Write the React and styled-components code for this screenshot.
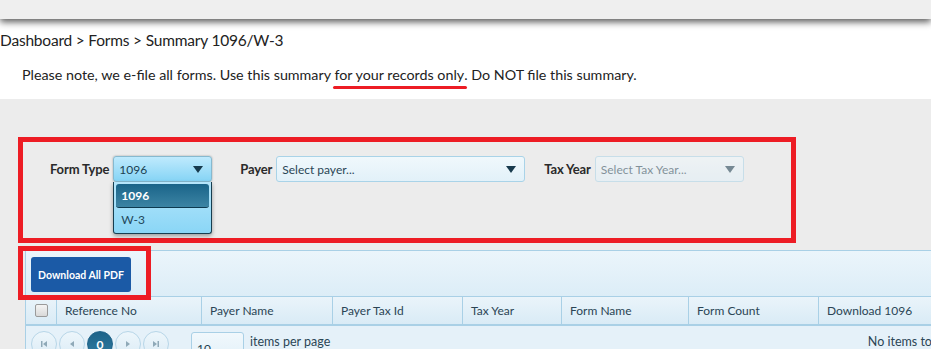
import React from "react";
import styled, { createGlobalStyle } from "styled-components";

const GlobalStyle = createGlobalStyle`
  html, body { margin: 0; padding: 0; overflow: hidden; background: #fff; }
  body { font-family: Lato, "Noto Sans", sans-serif; color: #222; }
  * { box-sizing: border-box; }
`;

const Page = styled.div`
  width: 931px;
  height: 349px;
  overflow: hidden;
  display: flex;
  flex-direction: column;
`;

const TopBar = styled.div`
  height: 19px;
  flex: none;
  background: #efefef;
  box-shadow: 0 3px 7px rgba(0, 0, 0, 0.65);
  position: relative;
  z-index: 2;
`;

const Header = styled.div`
  background: #fff;
  height: 80px;
  flex: none;
  padding-top: 11px;
`;

const Breadcrumb = styled.div`
  font-size: 15.5px;
  line-height: 20px;
  letter-spacing: -0.2px;
  color: #222;
`;

const Note = styled.div`
  margin-top: 16px;
  padding-left: 22px;
  font-size: 14.3px;
  line-height: 18px;
  color: #222;
`;

const Underlined = styled.span`
  position: relative;
  &::after {
    content: "";
    position: absolute;
    left: -1px;
    right: -3px;
    bottom: -6px;
    height: 3px;
    border-radius: 2px;
    background: #ed1c24;
  }
`;

const GrayArea = styled.div`
  flex: 1;
  background: #ececec;
  padding: 38px 0 0 18px;
  position: relative;
`;

const FilterBox = styled.div`
  width: 778px;
  height: 106px;
  border: 5px solid #ed1c24;
  padding: 14px 0 0 27px;
  display: flex;
  align-items: flex-start;
  position: relative;
  z-index: 3;
`;

const Field = styled.div`
  display: flex;
  align-items: center;
  margin-right: ${(p) => p.$gap || 0}px;
`;

const Label = styled.span`
  font-size: 13px;
  font-weight: 700;
  color: #2a2a2a;
  margin-right: 4px;
  letter-spacing: -0.15px;
`;

const SelectWrap = styled.div`
  position: relative;
`;

const Select = styled.div`
  width: ${(p) => p.$w}px;
  height: 26px;
  border-radius: 3px;
  border: 1px solid ${(p) => (p.$active ? "#86b9cf" : "#a9d3e8")};
  background: ${(p) =>
    p.$active
      ? "linear-gradient(#bfeafd, #86d4f5)"
      : "linear-gradient(#f0f8fc, #e2f1f9)"};
  display: flex;
  align-items: center;
  justify-content: space-between;
  padding: 0 8px 0 5px;
  font-size: 12px;
  color: ${(p) => (p.$active ? "#1b3f52" : "#2a4656")};
  opacity: ${(p) => (p.$disabled ? 0.55 : 1)};
  box-shadow: ${(p) => (p.$active ? "0 0 2px rgba(0,0,0,0.35)" : "none")};
`;

const Arrow = styled.span`
  width: 0;
  height: 0;
  border-left: 5px solid transparent;
  border-right: 5px solid transparent;
  border-top: 7px solid #173a4d;
`;

const DropList = styled.div`
  position: absolute;
  top: 26px;
  left: 0;
  width: 99px;
  padding: 2px 2px 2px;
  background: linear-gradient(#b6e6fb, #8ad6f6);
  border: 1px solid #173e50;
  border-top: none;
  border-radius: 0 0 3px 3px;
  box-shadow: 0 2px 4px rgba(0, 0, 0, 0.35);
`;

const DropItem = styled.div`
  height: ${(p) => (p.$selected ? 24 : 23)}px;
  display: flex;
  align-items: center;
  padding-left: 5px;
  font-size: 12px;
  border-radius: 3px;
  color: ${(p) => (p.$selected ? "#fff" : "#23485c")};
  font-weight: ${(p) => (p.$selected ? 700 : 400)};
  background: ${(p) =>
    p.$selected ? "linear-gradient(#1a6489, #3c84a4)" : "transparent"};
  border-bottom: ${(p) => (p.$selected ? "1px solid #0e3a50" : "none")};
`;

const GridWrap = styled.div`
  position: relative;
  margin-top: 7px;
  margin-left: 7px;
`;

const Highlight = styled.div`
  position: absolute;
  left: -7px;
  top: -4px;
  width: 133px;
  height: 54px;
  border: 5px solid #ed1c24;
  z-index: 3;
  pointer-events: none;
`;

const Grid = styled.div`
  width: 959px;
  border: 1px solid #a9d0e6;
  background: #e5f1f9;
`;

const Toolbar = styled.div`
  height: 45px;
  padding: 6px 0 0 5px;
  background: linear-gradient(#ebf5fb, #dcedf7);
`;

const Button = styled.button`
  width: 100px;
  height: 35px;
  border: none;
  border-radius: 3px;
  background: #1b5aa6;
  color: #fff;
  font-family: Lato, "Noto Sans", sans-serif;
  font-size: 10.5px;
  font-weight: 700;
  padding: 0;
`;

const HeaderRow = styled.div`
  display: grid;
  grid-template-columns: 30px 145px 131px 130px 99px 127px 130px 1fr;
  height: 30px;
  border-top: 1px solid #a9d0e6;
  border-bottom: 2px solid #a9d0e6;
  background: linear-gradient(#eaf4fa, #d9ebf6);
`;

const HeadCell = styled.div`
  display: flex;
  align-items: center;
  justify-content: ${(p) => (p.$center ? "center" : "flex-start")};
  padding-left: ${(p) => (p.$center ? 0 : 8)}px;
  border-left: ${(p) => (p.$first ? "none" : "1px solid #a9d0e6")};
  font-size: 12px;
  color: #2b4555;
`;

const Checkbox = styled.span`
  width: 13px;
  height: 13px;
  border: 1px solid #9a9a9a;
  border-radius: 2px;
  background: linear-gradient(#f4f4f4, #d9d9d9);
`;

const Pager = styled.div`
  height: 40px;
  display: flex;
  align-items: flex-start;
  padding: 5px 0 0 5px;
  background: #e5f1f9;
`;

const PageButton = styled.span`
  width: 26px;
  height: 26px;
  border-radius: 50%;
  margin-right: 2px;
  border: 1px solid ${(p) => (p.$active ? "#1f6389" : "#b7d6e8")};
  background: ${(p) =>
    p.$active ? "linear-gradient(#1d6389, #2f7ba0)" : "linear-gradient(#edf6fb, #dcecf6)"};
  color: ${(p) => (p.$active ? "#fff" : "#8fa9b8")};
  font-size: 12px;
  font-weight: 700;
  display: flex;
  align-items: center;
  justify-content: center;
`;

const SizeSelect = styled.div`
  margin-left: 20px;
  margin-top: 1px;
  width: 53px;
  height: 26px;
  border: 1px solid #a9d0e6;
  border-radius: 3px;
  background: linear-gradient(#f1f8fc, #e3f1f9);
  display: flex;
  align-items: flex-end;
  justify-content: space-between;
  padding: 0 6px 1px 5px;
  font-size: 12px;
  color: #23404f;
`;

const PagerText = styled.span`
  margin-left: 6px;
  margin-top: 3px;
  font-size: 12.5px;
  color: #2b4555;
`;

const NoItems = styled.span`
  margin-left: auto;
  margin-right: 10px;
  margin-top: 3px;
  font-size: 12.5px;
  color: #2b4555;
`;

const Tri = ({ dir }) => (
  <svg width="10" height="10" viewBox="0 0 10 10">
    {dir === "first" && (
      <>
        <rect x="2" y="2" width="1.5" height="6" fill="#8fa9b8" />
        <path d="M8 2 L4 5 L8 8 Z" fill="#8fa9b8" />
      </>
    )}
    {dir === "prev" && <path d="M7 2 L3 5 L7 8 Z" fill="#8fa9b8" />}
    {dir === "next" && <path d="M3 2 L7 5 L3 8 Z" fill="#8fa9b8" />}
    {dir === "last" && (
      <>
        <path d="M2 2 L6 5 L2 8 Z" fill="#8fa9b8" />
        <rect x="6.5" y="2" width="1.5" height="6" fill="#8fa9b8" />
      </>
    )}
  </svg>
);

const columns = [
  "Reference No",
  "Payer Name",
  "Payer Tax Id",
  "Tax Year",
  "Form Name",
  "Form Count",
  "Download 1096",
];

export default function App() {
  return (
    <>
      <GlobalStyle />
      <Page>
        <TopBar />
        <Header>
          <Breadcrumb>Dashboard &gt; Forms &gt; Summary 1096/W-3</Breadcrumb>
          <Note>
            Please note, we e-file all forms. Use this summary{" "}
            <Underlined>for your records only</Underlined>. Do NOT file this summary.
          </Note>
        </Header>
        <GrayArea>
          <FilterBox>
            <Field $gap={28}>
              <Label>Form Type</Label>
              <SelectWrap>
                <Select $w={99} $active>
                  <span>1096</span>
                  <Arrow />
                </Select>
                <DropList>
                  <DropItem $selected>1096</DropItem>
                  <DropItem>W-3</DropItem>
                </DropList>
              </SelectWrap>
            </Field>
            <Field $gap={19}>
              <Label>Payer</Label>
              <Select $w={249}>
                <span>Select payer...</span>
                <Arrow />
              </Select>
            </Field>
            <Field>
              <Label>Tax Year</Label>
              <Select $w={149} $disabled>
                <span>Select Tax Year...</span>
                <Arrow />
              </Select>
            </Field>
          </FilterBox>
          <GridWrap>
            <Highlight />
            <Grid>
              <Toolbar>
                <Button>Download All PDF</Button>
              </Toolbar>
              <HeaderRow>
                <HeadCell $first $center>
                  <Checkbox />
                </HeadCell>
                {columns.map((c) => (
                  <HeadCell key={c}>{c}</HeadCell>
                ))}
              </HeaderRow>
              <Pager>
                <PageButton><Tri dir="first" /></PageButton>
                <PageButton><Tri dir="prev" /></PageButton>
                <PageButton $active>0</PageButton>
                <PageButton><Tri dir="next" /></PageButton>
                <PageButton><Tri dir="last" /></PageButton>
                <SizeSelect>
                  <span>10</span>
                  <Arrow />
                </SizeSelect>
                <PagerText>items per page</PagerText>
                <NoItems>No items to display</NoItems>
              </Pager>
            </Grid>
          </GridWrap>
        </GrayArea>
      </Page>
    </>
  );
}
